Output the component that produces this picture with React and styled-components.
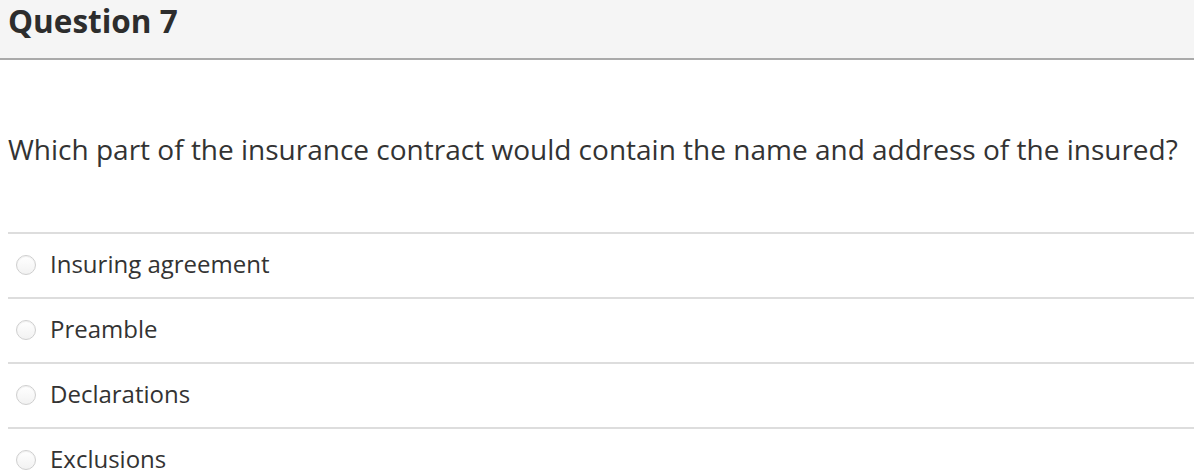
import styled, { createGlobalStyle } from "styled-components";

const Global = createGlobalStyle`
    body {
        margin: 0;
        background: #FFFFFF;
        font-family: 'Open Sans', 'Liberation Sans', sans-serif;
        color: #333333;
    }
`

const Page = styled.div`
    width: 1194px;
    height: 476px;
    overflow: hidden;
`

const Header = styled.div`
    box-sizing: border-box;
    height: 60px;
    background: #F5F5F5;
    border-bottom: 2px solid #AAAAAA;
    padding: 0 8px;
    display: flex;
    align-items: flex-start;
    & h2 {
        margin: 0;
        font-size: 31.5px;
        line-height: 42px;
        font-weight: 700;
        color: #2D2D2D;
    }
`

const Body = styled.div`
    padding: 0 0 0 8px;
`

const QuestionText = styled.p`
    margin: 0;
    padding: 70px 0 64px 0;
    font-size: 28px;
    line-height: 38px;
    color: #333333;
    white-space: nowrap;
`

const Answers = styled.div`
    display: flex;
    flex-direction: column;
`

const Answer = styled.label`
    box-sizing: border-box;
    height: 65px;
    border-top: 2px solid #DDDDDD;
    display: flex;
    align-items: center;
    gap: 14px;
    padding-left: 8px;
    padding-bottom: 4px;
    font-size: 24px;
    color: #333333;
    cursor: pointer;
`

const Radio = styled.span`
    box-sizing: border-box;
    width: 20px;
    height: 20px;
    margin-top: 2px;
    border-radius: 50%;
    border: 1px solid #CFCFCF;
    background: linear-gradient(#FFFFFF, #F2F2F2);
    box-shadow: inset 0 1px 1px rgba(0, 0, 0, 0.06);
    flex-shrink: 0;
`

function App() {
    const opcoes = ["Insuring agreement", "Preamble", "Declarations", "Exclusions"];

    return (
        <Page>
            <Global />
            <Header>
                <h2>Question 7</h2>
            </Header>
            <Body>
                <QuestionText>
                    Which part of the insurance contract would contain the name and address of the insured?
                </QuestionText>
                <Answers>
                    {opcoes.map((o) =>
                        <Answer key={o}>
                            <Radio />
                            <span>{o}</span>
                        </Answer>
                    )}
                </Answers>
            </Body>
        </Page>
    )
}

export default App;
